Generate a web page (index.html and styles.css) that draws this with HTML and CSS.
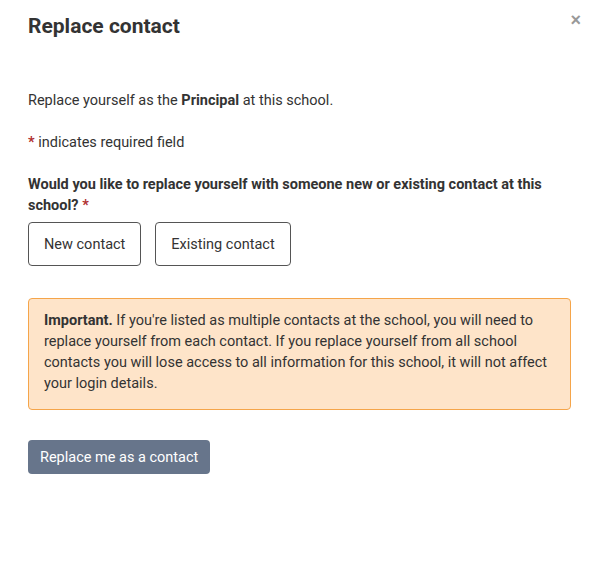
FILE: index.html
```html
<!DOCTYPE html>
<html lang="en">
<head>
    <meta charset="UTF-8">
    <meta name="viewport" content="width=device-width, initial-scale=1.0">
    <title>Replace contact</title>
    <link rel="stylesheet" href="styles.css">
</head>
<body>
    <div class="modal">
        <div class="modal-header">
            <h1>Replace contact</h1>
            <button class="close" aria-label="Close">&#215;</button>
        </div>
        <p class="intro">Replace yourself as the <strong>Principal</strong> at this school.</p>
        <p class="required-note"><span class="req">*</span> indicates required field</p>
        <div class="question">
            <p class="label">Would you like to replace yourself with someone new or existing contact at this school? <span class="req">*</span></p>
            <div class="choices">
                <button class="choice">New contact</button>
                <button class="choice">Existing contact</button>
            </div>
        </div>
        <div class="warning">
            <strong>Important.</strong> If you're listed as multiple contacts at the school, you will need to replace yourself from each contact. If you replace yourself from all school contacts you will lose access to all information for this school, it will not affect your login details.
        </div>
        <button class="submit">Replace me as a contact</button>
    </div>
</body>
</html>
```

FILE: styles.css
```css
body {
    font-family: Roboto, "Liberation Sans", sans-serif;
    background-color: #fff;
    color: #333;
    margin: 0;
    padding: 0;
    font-size: 14.5px;
}

.modal {
    padding: 12px 8px 0 28px;
}

.modal-header {
    display: flex;
    justify-content: space-between;
    align-items: flex-start;
}

.modal-header h1 {
    margin: 2px 0 0;
    font-size: 21px;
    font-weight: 700;
    color: #333;
}

.close {
    background: none;
    border: none;
    padding: 0;
    font-size: 18px;
    font-weight: 700;
    line-height: 16px;
    color: #999;
    cursor: pointer;
}

.intro {
    margin: 52px 0 0;
    line-height: 21px;
}

.required-note {
    margin: 21px 0 0;
    line-height: 21px;
}

.req {
    color: #b03030;
    font-weight: 700;
}

.question {
    margin-top: 21px;
}

.label {
    margin: 0;
    font-weight: 700;
    line-height: 21px;
}

.choices {
    display: flex;
    gap: 14px;
    margin-top: 6px;
}

.choice {
    font-family: inherit;
    font-size: 14.5px;
    color: #333;
    background: #fff;
    border: 1px solid #555;
    border-radius: 4px;
    height: 44px;
    padding: 0 15px;
    cursor: pointer;
}

.warning {
    margin-top: 32px;
    width: 511px;
    padding: 11px 15px 15px;
    background-color: #fee4c9;
    border: 1px solid #f5a54a;
    border-radius: 4px;
    line-height: 21px;
}

.submit {
    margin-top: 30px;
    font-family: inherit;
    font-size: 14.5px;
    color: #fff;
    background-color: #67758b;
    border: none;
    border-radius: 4px;
    height: 34px;
    padding: 0 12px;
    cursor: pointer;
}
```
